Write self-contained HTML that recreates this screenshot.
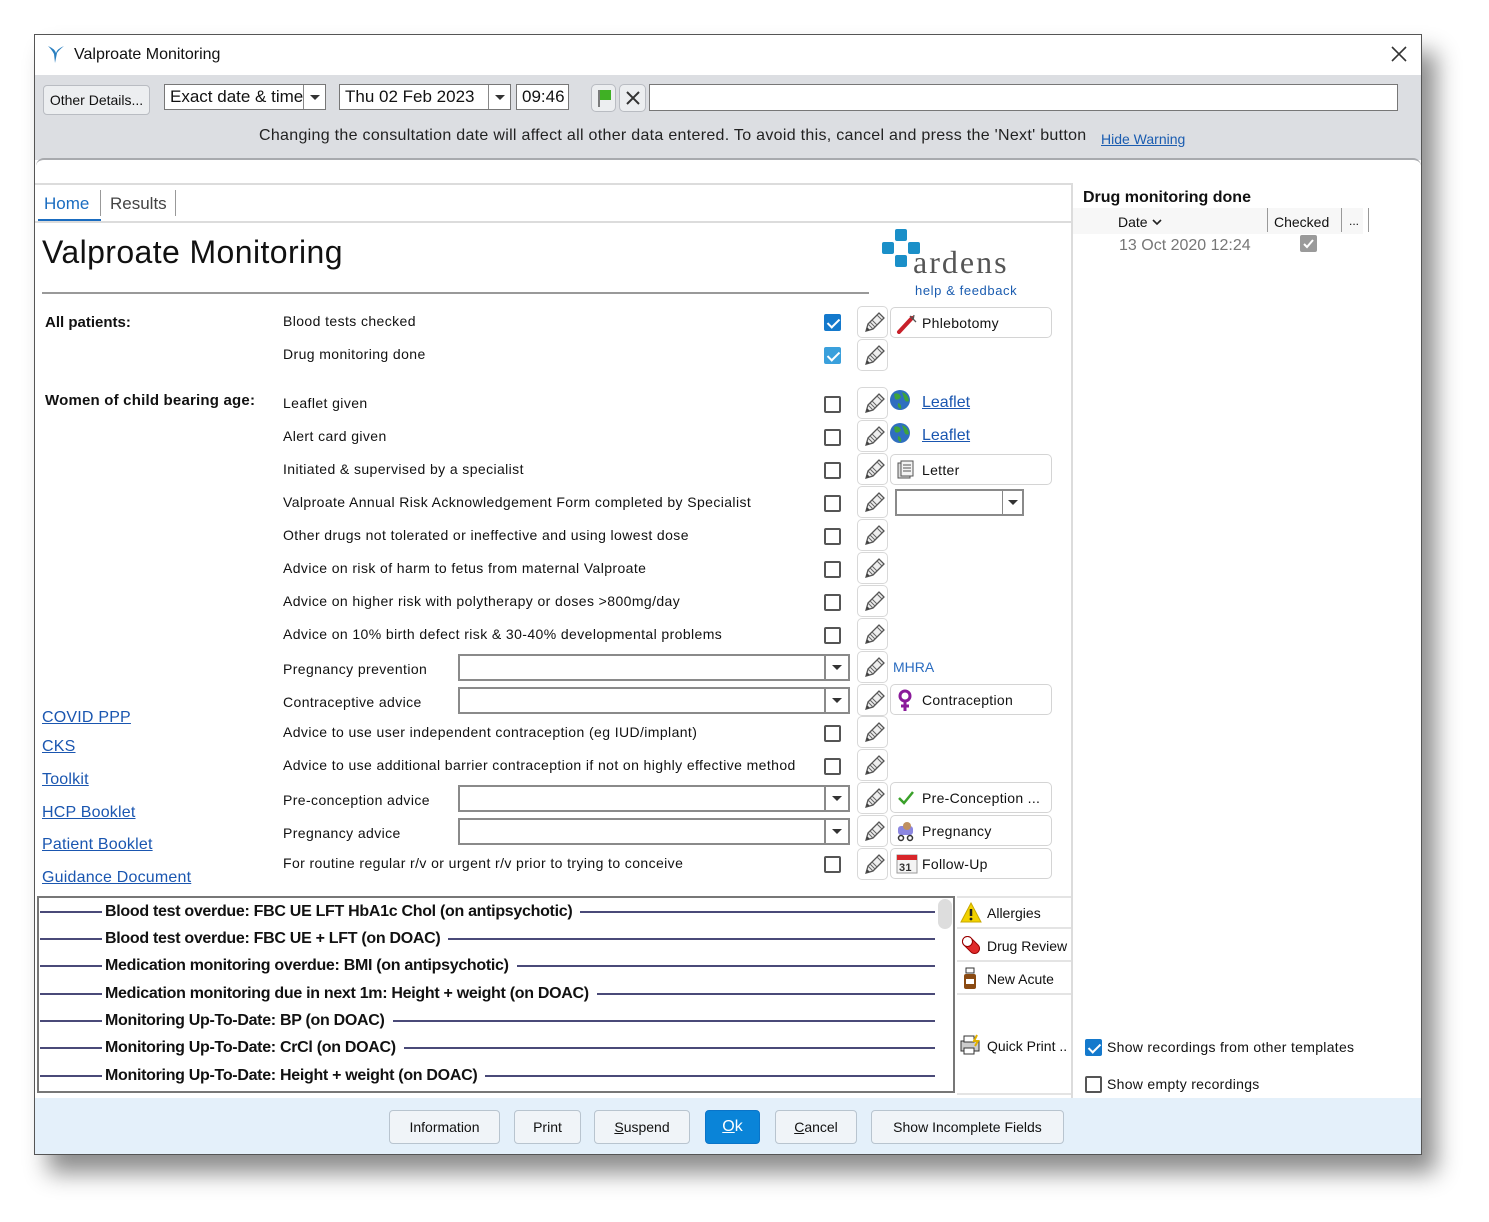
<!DOCTYPE html>
<html><head><meta charset="utf-8"><style>
*{box-sizing:border-box;margin:0;padding:0}
body{width:1489px;height:1222px;background:#fff;position:relative;overflow:hidden;font-family:"Liberation Sans",sans-serif;color:#111}
.a{position:absolute}
.win{left:34px;top:34px;width:1388px;height:1121px;border:1px solid #555;background:#fff;box-shadow:14px 18px 22px rgba(0,0,0,.45)}
.tb{left:35px;top:75px;width:1386px;height:85px;background:#dcdee2}
.btn{border:1px solid #b9bcc2;border-radius:4px;background:#eceef0;font-size:14px;display:flex;align-items:center;justify-content:center}
.box{border:1px solid #777;background:#fff;font-size:17px;display:flex;align-items:center;padding-left:5px}
.dd{position:absolute;right:0;top:0;bottom:0;width:22px;border-left:1px solid #888;display:flex;align-items:center;justify-content:center}
.dd:after{content:"";border-left:5px solid transparent;border-right:5px solid transparent;border-top:5px solid #333}
.lbl{left:283px;font-size:14px;color:#111;white-space:nowrap;letter-spacing:0.4px}
.cb{left:824px;width:17px;height:17px;border:2px solid #555;border-radius:2px;background:#fff}
.cbc{background:#1479cc;border-color:#1479cc}
.cbc:after{content:"";position:absolute;left:4px;top:0px;width:5px;height:10px;border:solid #fff;border-width:0 2px 2px 0;transform:rotate(45deg)}
.pen{left:857px;width:31px;height:32px;border:1px solid #d8d8d8;border-radius:5px;background:#fff}
.act{left:890px;width:162px;height:31px;border:1px solid #d4d4d4;border-radius:5px;background:#fff;font-size:14px;display:flex;align-items:center;padding-left:31px;letter-spacing:0.3px}
.sel{left:458px;width:392px;height:27px;border:2px solid #8a8a8a;background:#fff}
.lnk{left:42px;font-size:16px;color:#1a56b0;text-decoration:underline;letter-spacing:0.2px}
.msg{left:40px;width:895px;height:20px;font-size:16px;font-weight:bold;display:flex;align-items:center;letter-spacing:-0.3px}
.msg:before{content:"";width:62px;height:2px;background:#4a4a78;margin-right:3px;flex:none}
.msg:after{content:"";flex:1;height:2px;background:#4a4a78;margin-left:8px}
.side{left:957px;width:114px;height:31px;font-size:14px;display:flex;align-items:center;padding-left:30px;border-bottom:2px solid #e4e4e4}
.bb{top:1110px;height:34px;border:1px solid #b8c4cf;border-radius:4px;background:#f0f4f8;font-size:14px;display:flex;align-items:center;justify-content:center}
</style></head><body>
<svg width="0" height="0" style="position:absolute"><defs>
<symbol id="pencil" viewBox="0 0 30 30"><path d="M8 24 L10 17 L21 6 L26 11 L15 22 Z" fill="#eee" stroke="#555" stroke-width="1.3"/><path d="M10 17 L15 22 M12 15 L17 20 M14 13 L19 18 M19 8 L24 13" stroke="#666" stroke-width="1"/><path d="M8 24 L9 20 L12 23Z" fill="#444"/></symbol>
</defs></svg>

<div class="a win"></div>
<svg class="a" style="left:46px;top:43px" width="20" height="22" viewBox="0 0 20 22"><path d="M2 3 Q9 6 10 10 Q11 6 18 3 Q13 7 11 10 L9 20 L8 11 Q6 7 2 3Z" fill="#2a7fc0"/></svg>
<div class="a" style="left:74px;top:46px;font-size:16px">Valproate Monitoring</div>
<svg class="a" style="left:1391px;top:46px" width="16" height="16"><path d="M1 1L15 15M15 1L1 15" stroke="#333" stroke-width="1.6"/></svg>
<div class="a tb"></div>
<div class="a btn" style="left:43px;top:85px;width:107px;height:30px">Other Details...</div>
<div class="a box" style="left:164px;top:84px;width:162px;height:26px">Exact date &amp; time<span class="dd"></span></div>
<div class="a box" style="left:339px;top:84px;width:172px;height:26px">Thu 02 Feb 2023<span class="dd"></span></div>
<div class="a box" style="left:516px;top:84px;width:53px;height:26px">09:46</div>
<div class="a btn" style="left:591px;top:84px;width:25px;height:28px;border-radius:5px"><svg width="16" height="20"><path d="M3 2V19" stroke="#555" stroke-width="1.5"/><rect x="4" y="2" width="11" height="10" fill="#3fb024"/></svg></div>
<div class="a btn" style="left:619px;top:84px;width:27px;height:28px;border-radius:5px"><svg width="16" height="16"><path d="M2 2L14 14M14 2L2 14" stroke="#333" stroke-width="2"/></svg></div>
<div class="a box" style="left:649px;top:84px;width:749px;height:27px"></div>
<div class="a" style="left:259px;top:127px;font-size:16px;color:#222;letter-spacing:0.3px">Changing the consultation date will affect all other data entered. To avoid this, cancel and press the 'Next' button</div>
<div class="a" style="left:1101px;top:131px;font-size:14px;color:#1a5cb0;text-decoration:underline">Hide Warning</div>
<div class="a" style="left:36px;top:158px;width:1385px;height:12px;background:#fff;border-top:2px solid #a8aaae;border-radius:8px 8px 0 0"></div>

<div class="a" style="left:35px;top:183px;width:1038px;height:915px;border-top:2px solid #dcdcdc;border-right:2px solid #dcdcdc"></div>
<div class="a" style="left:44px;top:194px;font-size:17px;color:#1a6cc0">Home</div>
<div class="a" style="left:38px;top:219px;width:63px;height:3px;background:#1a6cc0"></div>
<div class="a" style="left:100px;top:190px;width:1px;height:26px;background:#999"></div>
<div class="a" style="left:110px;top:194px;font-size:17px;color:#444">Results</div>
<div class="a" style="left:175px;top:190px;width:1px;height:26px;background:#999"></div>
<div class="a" style="left:35px;top:221px;width:1036px;height:2px;background:#dcdcdc"></div>
<div class="a" style="left:42px;top:234px;font-size:32px;color:#111;letter-spacing:0.4px">Valproate Monitoring</div>
<div class="a" style="left:42px;top:292px;width:827px;height:2px;background:#999"></div>
<svg class="a" style="left:882px;top:229px" width="40" height="40"><g fill="#1a8fc8"><rect x="13" y="0" width="12" height="12" rx="2"/><rect x="0" y="13" width="12" height="12" rx="2"/><rect x="26" y="13" width="12" height="12" rx="2"/><rect x="13" y="26" width="12" height="12" rx="2"/></g></svg>
<div class="a" style="left:913px;top:244px;font-size:32px;color:#555;font-family:'Liberation Serif',serif;letter-spacing:2px">ardens</div>
<div class="a" style="left:915px;top:283px;font-size:13px;color:#1a5cb0;letter-spacing:0.6px">help &amp; feedback</div>

<div class="a" style="left:45px;top:314px;font-size:15px;font-weight:bold">All patients:</div>
<div class="a" style="left:45px;top:392px;font-size:15px;font-weight:bold;letter-spacing:0.2px">Women of child bearing age:</div>

<div class="a lbl" style="top:313px">Blood tests checked</div>
<div class="a cb cbc" style="top:314px"></div>
<div class="a pen" style="top:306px"><svg width="30" height="30"><use href="#pencil"/></svg></div>
<div class="a act" style="top:307px">Phlebotomy<svg class="a" style="left:5px;top:4px" width="22" height="22"><path d="M3 20L16 6" stroke="#c8202a" stroke-width="4" stroke-linecap="round"/><path d="M14 4L20 10M18 3L17 8" stroke="#555" stroke-width="1.3"/></svg></div>

<div class="a lbl" style="top:346px">Drug monitoring done</div>
<div class="a cb cbc" style="top:347px;background:#3aa0dc;border-color:#3aa0dc"></div>
<div class="a pen" style="top:339px"><svg width="30" height="30"><use href="#pencil"/></svg></div>

<div class="a lbl" style="top:395px">Leaflet given</div>
<div class="a cb" style="top:396px"></div>
<div class="a pen" style="top:387px"><svg width="30" height="30"><use href="#pencil"/></svg></div>
<svg class="a" style="left:889px;top:389px" width="22" height="22"><circle cx="11" cy="11" r="10" fill="#2f6fc0"/><path d="M5 5Q10 3 12 8Q9 12 6 10Z M13 3Q19 5 20 12Q16 14 15 9Z M9 14Q13 15 12 20Q8 19 9 14Z" fill="#3ea43a"/></svg>
<div class="a" style="left:922px;top:394px;font-size:16px;color:#1a56b0;text-decoration:underline">Leaflet</div>

<div class="a lbl" style="top:428px">Alert card given</div>
<div class="a cb" style="top:429px"></div>
<div class="a pen" style="top:420px"><svg width="30" height="30"><use href="#pencil"/></svg></div>
<svg class="a" style="left:889px;top:422px" width="22" height="22"><circle cx="11" cy="11" r="10" fill="#2f6fc0"/><path d="M5 5Q10 3 12 8Q9 12 6 10Z M13 3Q19 5 20 12Q16 14 15 9Z M9 14Q13 15 12 20Q8 19 9 14Z" fill="#3ea43a"/></svg>
<div class="a" style="left:922px;top:427px;font-size:16px;color:#1a56b0;text-decoration:underline">Leaflet</div>

<div class="a lbl" style="top:461px">Initiated &amp; supervised by a specialist</div>
<div class="a cb" style="top:462px"></div>
<div class="a pen" style="top:453px"><svg width="30" height="30"><use href="#pencil"/></svg></div>
<div class="a act" style="top:454px">Letter<svg class="a" style="left:6px;top:5px" width="18" height="20"><rect x="1" y="3" width="12" height="15" fill="#ddd" stroke="#555"/><rect x="4" y="1" width="12" height="15" fill="#f4f4f4" stroke="#555"/><path d="M6 5h8M6 8h8M6 11h8" stroke="#555"/></svg></div>

<div class="a lbl" style="top:494px">Valproate Annual Risk Acknowledgement Form completed by Specialist</div>
<div class="a cb" style="top:495px"></div>
<div class="a pen" style="top:486px"><svg width="30" height="30"><use href="#pencil"/></svg></div>
<div class="a" style="left:895px;top:489px;width:129px;height:27px;border:2px solid #8a8a8a;background:#fff"><span class="dd" style="width:20px"></span></div>

<div class="a lbl" style="top:527px">Other drugs not tolerated or ineffective and using lowest dose</div>
<div class="a cb" style="top:528px"></div>
<div class="a pen" style="top:519px"><svg width="30" height="30"><use href="#pencil"/></svg></div>

<div class="a lbl" style="top:560px">Advice on risk of harm to fetus from maternal Valproate</div>
<div class="a cb" style="top:561px"></div>
<div class="a pen" style="top:552px"><svg width="30" height="30"><use href="#pencil"/></svg></div>

<div class="a lbl" style="top:593px">Advice on higher risk with polytherapy or doses &gt;800mg/day</div>
<div class="a cb" style="top:594px"></div>
<div class="a pen" style="top:585px"><svg width="30" height="30"><use href="#pencil"/></svg></div>

<div class="a lbl" style="top:626px">Advice on 10% birth defect risk &amp; 30-40% developmental problems</div>
<div class="a cb" style="top:627px"></div>
<div class="a pen" style="top:618px"><svg width="30" height="30"><use href="#pencil"/></svg></div>

<div class="a lbl" style="top:661px">Pregnancy prevention</div>
<div class="a sel" style="top:654px"><span class="dd" style="width:24px;border-left:2px solid #8a8a8a"></span></div>
<div class="a pen" style="top:651px"><svg width="30" height="30"><use href="#pencil"/></svg></div>
<div class="a" style="left:893px;top:659px;font-size:14px;color:#2a6cc0">MHRA</div>

<div class="a lbl" style="top:694px">Contraceptive advice</div>
<div class="a sel" style="top:687px"><span class="dd" style="width:24px;border-left:2px solid #8a8a8a"></span></div>
<div class="a pen" style="top:684px"><svg width="30" height="30"><use href="#pencil"/></svg></div>
<div class="a act" style="top:684px">Contraception<svg class="a" style="left:6px;top:4px" width="16" height="24"><circle cx="8" cy="7" r="5" fill="none" stroke="#8a1a9a" stroke-width="3"/><path d="M8 12V22M4 17H12" stroke="#8a1a9a" stroke-width="3"/></svg></div>

<div class="a lbl" style="top:724px">Advice to use user independent contraception (eg IUD/implant)</div>
<div class="a cb" style="top:725px"></div>
<div class="a pen" style="top:716px"><svg width="30" height="30"><use href="#pencil"/></svg></div>

<div class="a lbl" style="top:757px">Advice to use additional barrier contraception if not on highly effective method</div>
<div class="a cb" style="top:758px"></div>
<div class="a pen" style="top:749px"><svg width="30" height="30"><use href="#pencil"/></svg></div>

<div class="a lbl" style="top:792px">Pre-conception advice</div>
<div class="a sel" style="top:785px"><span class="dd" style="width:24px;border-left:2px solid #8a8a8a"></span></div>
<div class="a pen" style="top:782px"><svg width="30" height="30"><use href="#pencil"/></svg></div>
<div class="a act" style="top:782px">Pre-Conception ...<svg class="a" style="left:6px;top:7px" width="18" height="16"><path d="M2 8L7 13L16 2" stroke="#3aa02a" stroke-width="2.5" fill="none"/></svg></div>

<div class="a lbl" style="top:825px">Pregnancy advice</div>
<div class="a sel" style="top:818px"><span class="dd" style="width:24px;border-left:2px solid #8a8a8a"></span></div>
<div class="a pen" style="top:815px"><svg width="30" height="30"><use href="#pencil"/></svg></div>
<div class="a act" style="top:815px">Pregnancy<svg class="a" style="left:5px;top:4px" width="20" height="22"><rect x="2" y="6" width="15" height="9" rx="3" fill="#8b86e0"/><circle cx="11" cy="6" r="4" fill="#c09060"/><circle cx="5" cy="18" r="2.5" fill="none" stroke="#333" stroke-width="1.5"/><circle cx="14" cy="18" r="2.5" fill="none" stroke="#333" stroke-width="1.5"/></svg></div>

<div class="a lbl" style="top:855px">For routine regular r/v or urgent r/v prior to trying to conceive</div>
<div class="a cb" style="top:856px"></div>
<div class="a pen" style="top:848px"><svg width="30" height="30"><use href="#pencil"/></svg></div>
<div class="a act" style="top:848px">Follow-Up<svg class="a" style="left:5px;top:5px" width="22" height="20"><rect x="1" y="1" width="20" height="18" fill="#f4f4f4" stroke="#999"/><rect x="1" y="1" width="20" height="5" fill="#d8262a"/><text x="3" y="17" font-size="11" font-weight="bold" fill="#333" font-family="Liberation Sans">31</text></svg></div>

<div class="a lnk" style="top:709px">COVID PPP</div>
<div class="a lnk" style="top:738px">CKS</div>
<div class="a lnk" style="top:771px">Toolkit</div>
<div class="a lnk" style="top:804px">HCP Booklet</div>
<div class="a lnk" style="top:836px">Patient Booklet</div>
<div class="a lnk" style="top:869px">Guidance Document</div>

<div class="a" style="left:37px;top:896px;width:918px;height:197px;border:2px solid #777;background:#fff"></div>
<div class="a" style="left:938px;top:899px;width:14px;height:30px;border-radius:7px;background:#ddd"></div>
<div class="a msg" style="top:902px"><span style="flex:none">Blood test overdue: FBC UE LFT HbA1c Chol (on antipsychotic)</span></div>
<div class="a msg" style="top:929px"><span style="flex:none">Blood test overdue: FBC UE + LFT (on DOAC)</span></div>
<div class="a msg" style="top:956px"><span style="flex:none">Medication monitoring overdue: BMI (on antipsychotic)</span></div>
<div class="a msg" style="top:984px"><span style="flex:none">Medication monitoring due in next 1m: Height + weight (on DOAC)</span></div>
<div class="a msg" style="top:1011px"><span style="flex:none">Monitoring Up-To-Date: BP (on DOAC)</span></div>
<div class="a msg" style="top:1038px"><span style="flex:none">Monitoring Up-To-Date: CrCl (on DOAC)</span></div>
<div class="a msg" style="top:1066px"><span style="flex:none">Monitoring Up-To-Date: Height + weight (on DOAC)</span></div>

<div class="a" style="left:957px;top:896px;width:114px;height:2px;background:#e4e4e4"></div>
<div class="a side" style="top:898px">Allergies<svg class="a" style="left:3px;top:4px" width="22" height="22"><path d="M11 1L21 20H1Z" fill="#f2d200" stroke="#c8a800"/><path d="M11 7V14" stroke="#222" stroke-width="2.5"/><circle cx="11" cy="17" r="1.4" fill="#222"/></svg></div>
<div class="a side" style="top:931px;overflow:hidden;white-space:nowrap">Drug Review<svg class="a" style="left:3px;top:3px" width="22" height="22"><g transform="rotate(-45 11 11)"><rect x="6" y="1" width="10" height="20" rx="5" fill="#e02a2a" stroke="#900"/><rect x="6" y="1" width="10" height="10" rx="5" fill="#fff" stroke="#900"/></g></svg></div>
<div class="a side" style="top:964px">New Acute<svg class="a" style="left:6px;top:3px" width="14" height="24"><rect x="3" y="1" width="8" height="5" fill="#fff" stroke="#333"/><rect x="1" y="7" width="12" height="15" rx="2" fill="#8a4a12"/><rect x="3" y="12" width="8" height="5" fill="#fff"/></svg></div>
<div class="a side" style="top:1030px;border:none">Quick Print ..<svg class="a" style="left:2px;top:4px" width="24" height="22"><rect x="2" y="7" width="18" height="10" fill="#ccc" stroke="#333"/><rect x="5" y="2" width="10" height="6" fill="#fff" stroke="#333"/><rect x="5" y="14" width="10" height="6" fill="#fff" stroke="#333"/><path d="M18 1L15 7H19L16 12" stroke="#e0b000" stroke-width="2" fill="none"/></svg></div>
<div class="a" style="left:957px;top:1093px;width:114px;height:2px;background:#e4e4e4"></div>

<div class="a" style="left:1083px;top:189px;font-size:16px;font-weight:bold">Drug monitoring done</div>
<div class="a" style="left:1073px;top:208px;width:290px;height:26px;background:#f7f7f7"></div>
<div class="a" style="left:1118px;top:214px;font-size:14px">Date <svg width="12" height="10"><path d="M2 3L6 7L10 3" stroke="#222" stroke-width="1.6" fill="none"/></svg></div>
<div class="a" style="left:1267px;top:208px;width:1px;height:24px;background:#999"></div>
<div class="a" style="left:1274px;top:214px;font-size:14px">Checked</div>
<div class="a" style="left:1341px;top:208px;width:1px;height:24px;background:#999"></div>
<div class="a" style="left:1349px;top:214px;font-size:12px">...</div>
<div class="a" style="left:1368px;top:208px;width:1px;height:24px;background:#999"></div>
<div class="a" style="left:1119px;top:237px;font-size:16px;color:#777">13 Oct 2020 12:24</div>
<div class="a" style="left:1300px;top:235px;width:17px;height:17px;background:#9a9a9a;border-radius:2px"><svg width="17" height="17"><path d="M4 9L7 12L13 5" stroke="#fff" stroke-width="2" fill="none"/></svg></div>
<div class="a cb cbc" style="left:1085px;top:1039px"></div>
<div class="a" style="left:1107px;top:1039px;font-size:14px;letter-spacing:0.3px">Show recordings from other templates</div>
<div class="a cb" style="left:1085px;top:1076px"></div>
<div class="a" style="left:1107px;top:1076px;font-size:14px;letter-spacing:0.3px">Show empty recordings</div>

<div class="a" style="left:35px;top:1098px;width:1386px;height:56px;background:#e4f0fa"></div>
<div class="a bb" style="left:389px;width:111px">Information</div>
<div class="a bb" style="left:514px;width:67px">Print</div>
<div class="a bb" style="left:594px;width:96px"><u>S</u>uspend</div>
<div class="a bb" style="left:705px;width:55px;background:#0a84d8;border-color:#0a74c8;color:#fff;font-size:16px"><u>O</u>k</div>
<div class="a bb" style="left:775px;width:82px"><u>C</u>ancel</div>
<div class="a bb" style="left:871px;width:193px">Show Incomplete Fields</div>
</body></html>
